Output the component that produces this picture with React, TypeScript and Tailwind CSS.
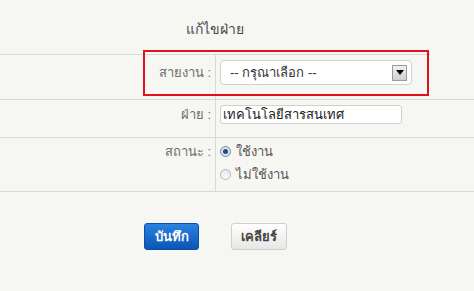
import React from "react";

const font = { fontFamily: '"Liberation Sans", "Noto Sans", "DejaVu Sans", sans-serif' };

const Row: React.FC<{ label: string; className: string; children: React.ReactNode }> = ({
  label,
  className,
  children,
}) => (
  <div className={`flex border-b border-[#d9d9d6] ${className}`}>
    <div className="w-[216px] shrink-0 border-r border-[#d9d9d6] pr-[4px] text-right text-[13px] text-[#6d6d6d]">
      {label} :
    </div>
    <div className="pl-[4px]">{children}</div>
  </div>
);

export default function App() {
  return (
    <div className="relative w-[474px] h-[291px] bg-[#f6f6f3] overflow-hidden" style={font}>
      <div className="w-[430px] h-[55px] flex justify-center pt-[19px] border-b border-[#d9d9d6] text-[14px] font-medium text-[#4a4a4a]">
        แก้ไขฝ่าย
      </div>
      <div className="w-[474px]">
        <Row label="สายงาน" className="h-[45px] [&>div:first-child]:pt-[8px]">
          <div className="mt-[5px] w-[192px] h-[25px] flex items-center justify-between rounded-[4px] border border-[#cfcfcf] bg-white pl-[9px] pr-[4px] text-[13px] text-[#333]">
            <span>-- กรุณาเลือก --</span>
            <span className="w-[15px] h-[16px] flex items-center justify-center border border-[#9a9a9a] bg-gradient-to-b from-[#f2f2f2] to-[#cfcfcf]">
              <span className="w-0 h-0 border-l-[4px] border-r-[4px] border-t-[5px] border-l-transparent border-r-transparent border-t-black" />
            </span>
          </div>
        </Row>
        <Row label="ฝ่าย" className="h-[38px] [&>div:first-child]:pt-[5px]">
          <div className="mt-[5px] w-[182px] h-[19px] flex items-center rounded-[3px] border border-[#cfcfcf] bg-white pl-[2px] text-[13px] text-[#222]">
            เทคโนโลยีสารสนเทศ
          </div>
        </Row>
        <Row label="สถานะ" className="h-[54px] [&>div:first-child]:pt-[4px]">
          <div className="flex flex-col gap-[3px] pt-[4px] text-[13px] text-[#555]">
            <label className="flex items-center gap-[5px]">
              <span className="w-[11px] h-[11px] rounded-full border border-[#7d8a99] bg-[#dbe4ee] flex items-center justify-center">
                <span className="w-[5px] h-[5px] rounded-full bg-[#1f4f8a]" />
              </span>
              ใช้งาน
            </label>
            <label className="flex items-center gap-[5px]">
              <span className="w-[11px] h-[11px] rounded-full border border-[#b5b5b5] bg-gradient-to-b from-[#e8e8e8] to-[#fafafa]" />
              ไม่ใช้งาน
            </label>
          </div>
        </Row>
      </div>
      <div className="flex gap-[32px] pl-[144px] pt-[31px]">
        <button className="w-[55px] h-[27px] rounded-[3px] border border-[#0b4fa8] bg-gradient-to-b from-[#2a82e0] to-[#0b55b5] text-[13px] font-bold text-white">
          บันทึก
        </button>
        <button className="w-[56px] h-[27px] rounded-[3px] border border-[#cfcfcf] bg-gradient-to-b from-[#ffffff] to-[#e6e6e6] text-[13px] font-bold text-[#444]">
          เคลียร์
        </button>
      </div>
      <div className="absolute left-[143px] top-[50px] w-[286px] h-[46px] border-2 border-[#e0101e]" />
    </div>
  );
}
